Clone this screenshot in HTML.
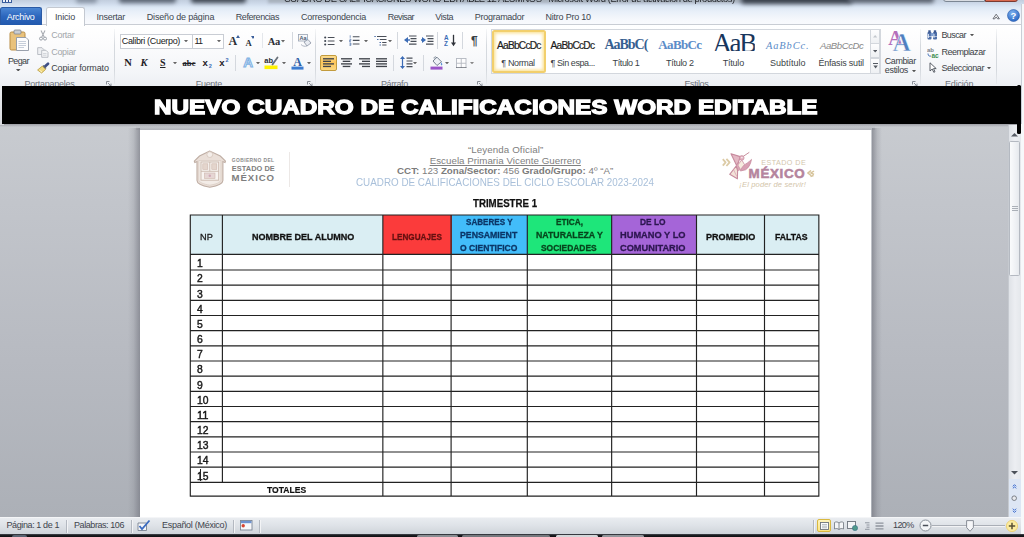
<!DOCTYPE html>
<html lang="es"><head><meta charset="utf-8"><title>Cuadro de calificaciones</title>
<style>
html,body{margin:0;padding:0}
body{width:1024px;height:537px;overflow:hidden;position:relative;background:#fff;font-family:"Liberation Sans",sans-serif}
.t{position:absolute;white-space:nowrap;display:block}
.r{position:absolute;display:block;box-sizing:border-box}
</style></head><body>
<div id="chrome-backgrounds">
<div class="r" style="left:0.00px;top:0.00px;width:1024.00px;height:25.00px;background:linear-gradient(#c2cede 0px,#d0dcec 4px,#dde8f5 7px,#e9f0f9 12px,#f6f8fc 20px,#f9fafd 25px)"></div>
<div class="r" style="left:76.00px;top:-5.00px;width:21.00px;height:8.00px;background:#8793a3;filter:blur(2px);border-radius:3px"></div>
<div class="r" style="left:119.00px;top:-5.00px;width:57.00px;height:8.20px;background:#5c6674;filter:blur(2px);border-radius:3px"></div>
<div class="r" style="left:191.00px;top:-5.00px;width:55.00px;height:8.40px;background:#414955;filter:blur(2px);border-radius:3px"></div>
<div class="r" style="left:268.00px;top:-5.00px;width:474.00px;height:8.20px;background:#a7b0bc;filter:blur(1.500px)"></div>
<div class="r" style="left:741.00px;top:-5.00px;width:111.00px;height:8.60px;background:#3a414c;filter:blur(2px);border-radius:3px"></div>
<div class="r" style="left:848.00px;top:-5.00px;width:86.00px;height:8.30px;background:#59626f;filter:blur(2px);border-radius:3px"></div>
<span class="t" style="left:284.00px;top:-7.86px;font:normal normal 9.40px/13px 'Liberation Sans',sans-serif;color:#23262b;letter-spacing:-0.419px;filter:blur(.4px);">CUADRO DE CALIFICACIONES WORD EDITABLE 12 ALUMNOS - Microsoft Word (Error de activación de productos)</span>
<div class="r" style="left:943.00px;top:-4.00px;width:42.00px;height:6.00px;background:#d9dde3;border:1px solid #7c8794;border-radius:0 0 0 3px"></div>
<div class="r" style="left:985.00px;top:-4.00px;width:32.50px;height:6.00px;background:#d9694e;border:1px solid #7a3a30;border-radius:0 0 3px 0"></div>
<div class="r" style="left:2.00px;top:-2.00px;width:9.50px;height:5.20px;background:#eef2f9;border:1px solid #3b5f9f"></div>
<div class="r" style="left:4.50px;top:0.00px;width:1.50px;height:2.00px;background:#2f4f8f"></div>
<div class="r" style="left:7.50px;top:0.00px;width:1.50px;height:2.00px;background:#2f4f8f"></div>
<div class="r" style="left:0.00px;top:24.40px;width:1024.00px;height:61.60px;background:linear-gradient(#ffffff 0,#fcfcfd 30%,#f3f5f8 80%,#eceff3 100%);border-top:1px solid #c9cdd4"></div>
<div class="r" style="left:0.00px;top:124.00px;width:1024.00px;height:393.00px;background:linear-gradient(#c8cbd0,#c2c5cb 20%,#b7bac1 60%,#acb0b7 100%)"></div>
<div class="r" style="left:0.00px;top:124.00px;width:1024.00px;height:3.00px;background:linear-gradient(rgba(120,120,128,.55),rgba(160,160,168,0))"></div>
<div class="r" style="left:127.50px;top:128.00px;width:12.00px;height:389.00px;background:linear-gradient(90deg,rgba(120,122,132,0),rgba(120,122,132,.18) 45%,rgba(112,114,124,.62))"></div>
<div class="r" style="left:871.50px;top:128.00px;width:10.50px;height:389.00px;background:linear-gradient(270deg,rgba(120,122,132,0),rgba(120,122,132,.2) 45%,rgba(112,114,124,.62))"></div>
<div class="r" style="left:136.00px;top:126.00px;width:739.00px;height:4.00px;background:linear-gradient(rgba(120,122,132,0),rgba(120,122,132,.28))"></div>
<div class="r" style="left:139.50px;top:129.80px;width:731.80px;height:387.20px;background:#fff"></div>
<div class="r" style="left:0.00px;top:516.50px;width:1024.00px;height:17.50px;background:linear-gradient(#e9ecf0,#dfe3e8 45%,#cfd4da 100%);border-top:1px solid #f4f5f7"></div>
<div class="r" style="left:0.00px;top:533.80px;width:1024.00px;height:3.20px;background:linear-gradient(#4c5058,#1d1f23 35%,#0e0f11)"></div>
</div>
<nav id="ribbon-tabs">
<div class="r" style="left:0.00px;top:6.80px;width:41.80px;height:18.00px;background:linear-gradient(#4b86d3,#2c66bd 50%,#2259ad);border:1px solid #2a5aa5;border-bottom:none;border-radius:2.5px 2.5px 0 0"></div>
<span class="t" style="left:6.75px;top:10.87px;font:normal normal 9.00px/13px 'Liberation Sans',sans-serif;color:#fff;letter-spacing:-0.323px;">Archivo</span>
<div class="r" style="left:45.50px;top:6.80px;width:39.50px;height:19.20px;background:#fff;border:1px solid #c4c9d1;border-bottom:none;border-radius:2.5px 2.5px 0 0"></div>
<span class="t" style="left:55.00px;top:10.87px;font:normal normal 9.00px/13px 'Liberation Sans',sans-serif;color:#40464f;letter-spacing:-0.168px;">Inicio</span>
<span class="t" style="left:96.50px;top:10.87px;font:normal normal 9.00px/13px 'Liberation Sans',sans-serif;color:#40464f;letter-spacing:-0.252px;">Insertar</span>
<span class="t" style="left:146.75px;top:10.87px;font:normal normal 9.00px/13px 'Liberation Sans',sans-serif;color:#40464f;letter-spacing:-0.160px;">Diseño de página</span>
<span class="t" style="left:235.75px;top:10.87px;font:normal normal 9.00px/13px 'Liberation Sans',sans-serif;color:#40464f;letter-spacing:-0.434px;">Referencias</span>
<span class="t" style="left:301.00px;top:10.87px;font:normal normal 9.00px/13px 'Liberation Sans',sans-serif;color:#40464f;letter-spacing:-0.236px;">Correspondencia</span>
<span class="t" style="left:387.75px;top:10.87px;font:normal normal 9.00px/13px 'Liberation Sans',sans-serif;color:#40464f;letter-spacing:-0.608px;">Revisar</span>
<span class="t" style="left:435.25px;top:10.87px;font:normal normal 9.00px/13px 'Liberation Sans',sans-serif;color:#40464f;letter-spacing:-0.369px;">Vista</span>
<span class="t" style="left:474.75px;top:10.87px;font:normal normal 9.00px/13px 'Liberation Sans',sans-serif;color:#40464f;letter-spacing:-0.271px;">Programador</span>
<span class="t" style="left:545.60px;top:10.87px;font:normal normal 9.00px/13px 'Liberation Sans',sans-serif;color:#40464f;letter-spacing:-0.243px;">Nitro Pro 10</span>
<svg class="r" style="left:992.40px;top:12.60px;" width="8.4" height="7" viewBox="0 0 8.4 7"><path d="M1 5.800L4.200 1.200L7.400 5.800L5.600 5.800L4.200 3.900L2.800 5.800Z" fill="#fff" stroke="#5a5f68" stroke-width=".9" stroke-linejoin="round"/></svg>
<svg class="r" style="left:1007.00px;top:8.50px;" width="13" height="13" viewBox="0 0 13 13"><defs><radialGradient id="hg" cx=".4" cy=".3" r=".8"><stop offset="0" stop-color="#7fb2ee"/><stop offset="1" stop-color="#1f5fc0"/></radialGradient></defs><circle cx="6.5" cy="6.5" r="6" fill="url(#hg)" stroke="#2a5aa8" stroke-width=".6"/><text x="6.5" y="10" font-family="Liberation Sans,sans-serif" font-weight="bold" font-size="9.5" fill="#fff" text-anchor="middle">?</text></svg>
</nav>
<section id="ribbon">
<div id="grp-portapapeles">
<svg class="r" style="left:8.50px;top:28.50px;" width="21" height="23" viewBox="0 0 21 23"><rect x="1" y="3" width="15" height="18" rx="1.5" fill="#e9c27c" stroke="#b98d45" stroke-width="1"/>
<rect x="5" y="1" width="7" height="4" rx="1" fill="#c9cdd3" stroke="#80868f" stroke-width=".8"/>
<path d="M7.5 8.5H17L19.5 11V21.5H7.5Z" fill="#fdfdfe" stroke="#8e97a6" stroke-width=".9"/>
<path d="M9.5 12.5H17M9.5 14.5H17M9.5 16.5H17M9.5 18.5H15" stroke="#b7c1d1" stroke-width=".8"/></svg>
<span class="t" style="left:8.00px;top:54.97px;font:normal normal 9.00px/13px 'Liberation Sans',sans-serif;color:#3b3f46;letter-spacing:-0.653px;">Pegar</span>
<svg class="r" style="left:16.05px;top:68.65px;" width="4.5" height="2.7" viewBox="0 0 5 3"><path d="M0 0H5L2.5 3Z" fill="#555"/></svg>
<svg class="r" style="left:38.50px;top:30.00px;" width="8" height="11" viewBox="0 0 8 11"><path d="M2 .5L5.2 7M6 .5L2.8 7" stroke="#a9adb3" stroke-width="1.1" fill="none"/><circle cx="2" cy="8.6" r="1.5" fill="none" stroke="#9aa0a8" stroke-width="1"/><circle cx="6" cy="8.6" r="1.5" fill="none" stroke="#9aa0a8" stroke-width="1"/></svg>
<span class="t" style="left:51.25px;top:29.47px;font:normal normal 9.00px/13px 'Liberation Sans',sans-serif;color:#a2a6ab;letter-spacing:-0.293px;">Cortar</span>
<svg class="r" style="left:36.50px;top:46.50px;" width="12" height="11" viewBox="0 0 12 11"><path d="M.7 .7H5L7 2.7V7.5H.7Z" fill="#eef0f3" stroke="#b4b9c0" stroke-width=".9"/><path d="M4.7 3.3H9L11 5.3V10.3H4.7Z" fill="#f4f5f7" stroke="#b4b9c0" stroke-width=".9"/><path d="M6 6.5H9.5M6 8.2H9.5" stroke="#c4c8ce" stroke-width=".7"/></svg>
<span class="t" style="left:51.25px;top:45.97px;font:normal normal 9.00px/13px 'Liberation Sans',sans-serif;color:#a2a6ab;letter-spacing:-0.336px;">Copiar</span>
<svg class="r" style="left:36.50px;top:62.00px;" width="13" height="12" viewBox="0 0 13 12"><path d="M8 4.500L11 1.700" stroke="#3d4f86" stroke-width="2.600" stroke-linecap="round"/><path d="M6 3.600L9 6.600" stroke="#5e6672" stroke-width="1.400"/><path d="M5.200 4.200L8.600 7.400L4.600 11L.6 8Z" fill="#f1d97e" stroke="#b99a3a" stroke-width=".8"/><path d="M2.500 8.200L5 10" stroke="#fff6cf" stroke-width=".9"/></svg>
<span class="t" style="left:51.25px;top:61.97px;font:normal normal 9.00px/13px 'Liberation Sans',sans-serif;color:#3b3f46;letter-spacing:-0.145px;">Copiar formato</span>
<span class="t" style="left:24.50px;top:78.07px;font:normal normal 9.00px/13px 'Liberation Sans',sans-serif;color:#70757d;letter-spacing:-0.253px;">Portapapeles</span>
<svg class="r" style="left:105.50px;top:80.80px;" width="6" height="6" viewBox="0 0 6 6"><path d="M.5 3.5V.5H3.5" fill="none" stroke="#8a9099" stroke-width="1"/><path d="M2 2L5 5M5 2.6V5H2.6" fill="none" stroke="#8a9099" stroke-width="1"/></svg>
<div class="r" style="left:114.20px;top:29.00px;width:1.00px;height:55.00px;background:linear-gradient(rgba(213,217,222,.2),#d5d9de 30%,#d5d9de 75%,rgba(213,217,222,.3))"></div>
</div>
<div id="grp-fuente">
<div class="r" style="left:119.50px;top:33.60px;width:73.00px;height:15.60px;background:#fff;border:1px solid #c9cdd4"></div>
<div class="r" style="left:192.00px;top:33.60px;width:31.50px;height:15.60px;background:#fff;border:1px solid #c9cdd4"></div>
<span class="t" style="left:121.75px;top:35.17px;font:normal normal 9.00px/13px 'Liberation Sans',sans-serif;color:#222;letter-spacing:-0.329px;">Calibri (Cuerpo)</span>
<svg class="r" style="left:184.00px;top:40.10px;" width="4" height="2.4" viewBox="0 0 5 3"><path d="M0 0H5L2.5 3Z" fill="#666"/></svg>
<span class="t" style="left:194.50px;top:35.17px;font:normal normal 9.00px/13px 'Liberation Sans',sans-serif;color:#222;letter-spacing:-0.922px;">11</span>
<svg class="r" style="left:216.80px;top:40.10px;" width="4" height="2.4" viewBox="0 0 5 3"><path d="M0 0H5L2.5 3Z" fill="#666"/></svg>
<span class="t" style="left:228.50px;top:32.65px;font:normal bold 12.00px/17px 'Liberation Serif',serif;color:#2b2f36;letter-spacing:-1.166px;">A</span>
<svg class="r" style="left:235.50px;top:34.50px;" width="4" height="3" viewBox="0 0 4 3"><path d="M0 3H4L2 0Z" fill="#3b5f9b"/></svg>
<span class="t" style="left:245.50px;top:36.70px;font:normal bold 8.60px/12px 'Liberation Serif',serif;color:#2b2f36;letter-spacing:-0.711px;">A</span>
<svg class="r" style="left:250.60px;top:36.20px;" width="3.6" height="2.6" viewBox="0 0 3.6 2.6"><path d="M0 0H4L2 3Z" fill="#3b5f9b"/></svg>
<span class="t" style="left:267.75px;top:33.96px;font:normal bold 10.50px/15px 'Liberation Serif',serif;color:#2b2f36;letter-spacing:-0.416px;">Aa</span>
<svg class="r" style="left:281.00px;top:40.30px;" width="4" height="2.4" viewBox="0 0 5 3"><path d="M0 0H5L2.5 3Z" fill="#666"/></svg>
<div class="r" style="left:291.50px;top:32.00px;width:1.00px;height:17.00px;background:#d4d8de"></div>
<div class="r" style="left:261.50px;top:33.00px;width:1.00px;height:15.00px;background:#e4e7eb"></div>
<svg class="r" style="left:297.50px;top:34.00px;" width="14" height="13" viewBox="0 0 14 13"><rect x=".5" y=".5" width="9" height="6.5" fill="#f7f8fa" stroke="#9aa3b2" stroke-width=".8"/><text x="1.5" y="6" font-family="Liberation Sans,sans-serif" font-size="5.5" font-weight="bold" fill="#4d5a74">Aa</text><path d="M6 8L10 5.5L13 9L9 12Z" fill="#e9ecf2" stroke="#8a93a3" stroke-width=".8"/><path d="M3 10.5C5 12.5 7 12.5 9 12" stroke="#9aa3b2" stroke-width=".8" fill="none"/></svg>
<span class="t" style="left:124.25px;top:55.16px;font:normal bold 10.50px/15px 'Liberation Serif',serif;color:#1e2126;letter-spacing:-0.083px;">N</span>
<span class="t" style="left:140.50px;top:55.16px;font:italic bold 10.50px/15px 'Liberation Serif',serif;color:#1e2126;letter-spacing:0.996px;">K</span>
<span class="t" style="left:160.00px;top:55.62px;font:normal bold 10.00px/14px 'Liberation Serif',serif;color:#1e2126;letter-spacing:-0.062px;text-decoration:underline;">S</span>
<svg class="r" style="left:173.00px;top:61.60px;" width="4" height="2.4" viewBox="0 0 5 3"><path d="M0 0H5L2.5 3Z" fill="#666"/></svg>
<span class="t" style="left:182.50px;top:56.93px;font:normal bold 8.50px/12px 'Liberation Serif',serif;color:#1e2126;letter-spacing:0.083px;text-decoration:line-through;">abc</span>
<span class="t" style="left:202.50px;top:55.97px;font:normal bold 9.60px/13px 'Liberation Sans',sans-serif;color:#1e2126;letter-spacing:0.161px;">x</span>
<span class="t" style="left:208.80px;top:61.59px;font:normal bold 5.50px/8px 'Liberation Sans',sans-serif;color:#3b6bb5;letter-spacing:-0.059px;">2</span>
<span class="t" style="left:219.25px;top:55.97px;font:normal bold 9.60px/13px 'Liberation Sans',sans-serif;color:#1e2126;letter-spacing:0.161px;">x</span>
<span class="t" style="left:225.50px;top:55.59px;font:normal bold 5.50px/8px 'Liberation Sans',sans-serif;color:#3b6bb5;letter-spacing:-0.059px;">2</span>
<div class="r" style="left:235.00px;top:55.00px;width:1.00px;height:16.00px;background:#d4d8de"></div>
<svg class="r" style="left:241.50px;top:56.00px;" width="12" height="13" viewBox="0 0 12 13"><text x="6" y="11.3" font-family="Liberation Sans,sans-serif" font-weight="bold" font-size="13.5" text-anchor="middle" fill="#e6f1fb" stroke="#7fb1e3" stroke-width="1">A</text></svg>
<svg class="r" style="left:256.30px;top:61.60px;" width="4" height="2.4" viewBox="0 0 5 3"><path d="M0 0H5L2.5 3Z" fill="#666"/></svg>
<svg class="r" style="left:264.00px;top:55.50px;" width="15" height="14" viewBox="0 0 15 14"><text x="0.3" y="7" font-family="Liberation Sans,sans-serif" font-weight="bold" font-size="7.5" fill="#2a2d33">ab</text><path d="M8.5 8.5L13.5 1.5" stroke="#6a7079" stroke-width="1.8" stroke-linecap="round"/><rect x=".5" y="9.5" width="13" height="3.6" fill="#fff200"/></svg>
<svg class="r" style="left:281.50px;top:61.60px;" width="4" height="2.4" viewBox="0 0 5 3"><path d="M0 0H5L2.5 3Z" fill="#666"/></svg>
<svg class="r" style="left:290.50px;top:55.50px;" width="13" height="14" viewBox="0 0 13 14"><text x="6.5" y="9.6" font-family="Liberation Serif,serif" font-weight="bold" font-size="12" text-anchor="middle" fill="#2f5fa5">A</text><rect x=".5" y="10.6" width="12" height="3" fill="#3b7bd0"/></svg>
<svg class="r" style="left:306.50px;top:61.60px;" width="4" height="2.4" viewBox="0 0 5 3"><path d="M0 0H5L2.5 3Z" fill="#666"/></svg>
<span class="t" style="left:195.75px;top:78.07px;font:normal normal 9.00px/13px 'Liberation Sans',sans-serif;color:#70757d;letter-spacing:-0.295px;">Fuente</span>
<svg class="r" style="left:306.50px;top:80.80px;" width="6" height="6" viewBox="0 0 6 6"><path d="M.5 3.5V.5H3.5" fill="none" stroke="#8a9099" stroke-width="1"/><path d="M2 2L5 5M5 2.6V5H2.6" fill="none" stroke="#8a9099" stroke-width="1"/></svg>
<div class="r" style="left:315.25px;top:29.00px;width:1.00px;height:55.00px;background:linear-gradient(rgba(213,217,222,.2),#d5d9de 30%,#d5d9de 75%,rgba(213,217,222,.3))"></div>
</div>
<div id="grp-parrafo">
<svg class="r" style="left:323.50px;top:35.50px;" width="11" height="10" viewBox="0 0 11 10"><circle cx="1.2" cy="1.5" r="1.05" fill="#3f4652"/><circle cx="1.2" cy="5" r="1.05" fill="#3f4652"/><circle cx="1.2" cy="8.5" r="1.05" fill="#3f4652"/><path d="M3.8 1.5H10.5M3.8 5H10.5M3.8 8.5H10.5" stroke="#4a4f58" stroke-width="1.1"/></svg>
<svg class="r" style="left:338.50px;top:39.80px;" width="4" height="2.4" viewBox="0 0 5 3"><path d="M0 0H5L2.5 3Z" fill="#666"/></svg>
<svg class="r" style="left:349.00px;top:35.00px;" width="11" height="11" viewBox="0 0 11 11"><path d="M1.2 .3V2.8M.5 4.2H1.9V5.4H.5V6.6H1.9M.5 8H1.9V10.4H.5M.5 9.2H1.9" stroke="#4a6ea8" stroke-width=".7" fill="none"/><path d="M3.8 1.8H10.5M3.8 5.4H10.5M3.8 9H10.5" stroke="#4a4f58" stroke-width="1.1"/></svg>
<svg class="r" style="left:364.00px;top:39.80px;" width="4" height="2.4" viewBox="0 0 5 3"><path d="M0 0H5L2.5 3Z" fill="#666"/></svg>
<svg class="r" style="left:373.50px;top:35.00px;" width="13" height="11" viewBox="0 0 13 11"><path d="M.3 1.5H1.8M3 4.5H4.5M5.5 7.5H7M5.5 10H7" stroke="#4a6ea8" stroke-width="1"/><path d="M3 1.5H12.5M5.8 4.5H12.5M8.2 7.5H12.5M8.2 10H12.5" stroke="#4a4f58" stroke-width="1"/></svg>
<svg class="r" style="left:387.80px;top:39.80px;" width="4" height="2.4" viewBox="0 0 5 3"><path d="M0 0H5L2.5 3Z" fill="#666"/></svg>
<div class="r" style="left:397.00px;top:32.00px;width:1.00px;height:17.00px;background:#d4d8de"></div>
<svg class="r" style="left:403.50px;top:35.00px;" width="13" height="11" viewBox="0 0 13 11"><path d="M5 1H12.5M6.5 3.7H12.5M6.5 6.4H12.5M5 9.2H12.5" stroke="#4a4f58" stroke-width="1.2"/><path d="M0 5L4 2V8Z" fill="#3b6bb5"/><path d="M3.5 5H6" stroke="#3b6bb5" stroke-width="1.4"/></svg>
<svg class="r" style="left:420.50px;top:35.00px;" width="13" height="11" viewBox="0 0 13 11"><path d="M5 1H12.5M6.5 3.7H12.5M6.5 6.4H12.5M5 9.2H12.5" stroke="#4a4f58" stroke-width="1.2"/><path d="M5 5L1 2V8Z" fill="#3b6bb5"/><path d="M0 5H2" stroke="#3b6bb5" stroke-width="1.4"/></svg>
<div class="r" style="left:437.00px;top:32.00px;width:1.00px;height:17.00px;background:#d4d8de"></div>
<svg class="r" style="left:443.50px;top:34.00px;" width="13" height="13" viewBox="0 0 13 13"><text x="0" y="5.6" font-family="Liberation Sans,sans-serif" font-weight="bold" font-size="6.3" fill="#3b6bb5">A</text><text x="0" y="12" font-family="Liberation Sans,sans-serif" font-weight="bold" font-size="6.3" fill="#3b6bb5">Z</text><path d="M9.5 .8V10" stroke="#2f333a" stroke-width="1.3"/><path d="M7 8.5H12L9.5 12.3Z" fill="#2f333a"/></svg>
<div class="r" style="left:462.00px;top:32.00px;width:1.00px;height:17.00px;background:#d4d8de"></div>
<span class="t" style="left:471.00px;top:32.84px;font:normal bold 12.00px/17px 'Liberation Sans',sans-serif;color:#3a3e45;letter-spacing:0.826px;">¶</span>
<div class="r" style="left:320.25px;top:54.50px;width:16.50px;height:16.25px;background:linear-gradient(#fbdb8f,#fdc65a 45%,#fbd77f);border:1px solid #c29b3d;border-radius:2px"></div>
<svg class="r" style="left:323.00px;top:57.70px;" width="12" height="11.2" viewBox="0 0 12 11.2"><path d="M0 0.8H11" stroke="#3f434a" stroke-width="1.35"/><path d="M0 3.35H8" stroke="#3f434a" stroke-width="1.35"/><path d="M0 5.9H11" stroke="#3f434a" stroke-width="1.35"/><path d="M0 8.45H8" stroke="#3f434a" stroke-width="1.35"/></svg>
<svg class="r" style="left:341.00px;top:57.70px;" width="12" height="11.2" viewBox="0 0 12 11.2"><path d="M0 0.8H11" stroke="#3f434a" stroke-width="1.35"/><path d="M1.7 3.35H9.3" stroke="#3f434a" stroke-width="1.35"/><path d="M0 5.9H11" stroke="#3f434a" stroke-width="1.35"/><path d="M1.7 8.45H9.3" stroke="#3f434a" stroke-width="1.35"/></svg>
<svg class="r" style="left:358.50px;top:57.70px;" width="12" height="11.2" viewBox="0 0 12 11.2"><path d="M0 0.8H11" stroke="#3f434a" stroke-width="1.35"/><path d="M3 3.35H11" stroke="#3f434a" stroke-width="1.35"/><path d="M0 5.9H11" stroke="#3f434a" stroke-width="1.35"/><path d="M3 8.45H11" stroke="#3f434a" stroke-width="1.35"/></svg>
<svg class="r" style="left:376.00px;top:57.70px;" width="12" height="11.2" viewBox="0 0 12 11.2"><path d="M0 0.8H11" stroke="#3f434a" stroke-width="1.35"/><path d="M0 3.35H11" stroke="#3f434a" stroke-width="1.35"/><path d="M0 5.9H11" stroke="#3f434a" stroke-width="1.35"/><path d="M0 8.45H11" stroke="#3f434a" stroke-width="1.35"/></svg>
<div class="r" style="left:393.00px;top:55.00px;width:1.00px;height:16.00px;background:#d4d8de"></div>
<svg class="r" style="left:399.50px;top:56.00px;" width="13" height="13" viewBox="0 0 13 13"><path d="M2.5 0L5 3H0Z M2.5 13L5 10H0Z" fill="#3b6bb5"/><path d="M2.5 2.5V10.5" stroke="#3b6bb5" stroke-width="1.2"/><path d="M6.5 2.2H12.5M6.5 5H12.5M6.5 7.8H12.5M6.5 10.6H12.5" stroke="#4a4f58" stroke-width="1.2"/></svg>
<svg class="r" style="left:413.30px;top:61.60px;" width="4" height="2.4" viewBox="0 0 5 3"><path d="M0 0H5L2.5 3Z" fill="#666"/></svg>
<div class="r" style="left:423.00px;top:55.00px;width:1.00px;height:16.00px;background:#d4d8de"></div>
<svg class="r" style="left:429.50px;top:55.50px;" width="13" height="14" viewBox="0 0 13 14"><path d="M3 5L7 1.2L11.5 5.8L7 9.5Z" fill="#eef1f6" stroke="#6a7687" stroke-width=".9"/><path d="M4.2 2.6C3.6 .6 6.2 .2 6.6 2" fill="none" stroke="#6a7687" stroke-width=".8"/><path d="M11.3 6.3C12.6 8 12.6 9.2 11.6 9.4C10.6 9.2 10.6 8 11.3 6.3Z" fill="#5b8fd6"/><rect x=".5" y="10.6" width="12" height="3" fill="#9a55c8"/></svg>
<svg class="r" style="left:445.30px;top:61.60px;" width="4" height="2.4" viewBox="0 0 5 3"><path d="M0 0H5L2.5 3Z" fill="#666"/></svg>
<svg class="r" style="left:456.00px;top:57.50px;" width="10.5" height="10.5" viewBox="0 0 10.5 10.5"><rect x=".5" y=".5" width="9.5" height="9.5" fill="#fdfdfe" stroke="#b3b8c0" stroke-width=".9"/><path d="M5.25 .5V10M.5 5.25H10" stroke="#b3b8c0" stroke-width=".9"/><path d="M0 10H10.500" stroke="#4a4f58" stroke-width="1.100"/></svg>
<svg class="r" style="left:470.30px;top:61.60px;" width="4" height="2.4" viewBox="0 0 5 3"><path d="M0 0H5L2.5 3Z" fill="#888"/></svg>
<span class="t" style="left:381.00px;top:78.07px;font:normal normal 9.00px/13px 'Liberation Sans',sans-serif;color:#70757d;letter-spacing:-0.395px;">Párrafo</span>
<svg class="r" style="left:476.50px;top:80.80px;" width="6" height="6" viewBox="0 0 6 6"><path d="M.5 3.5V.5H3.5" fill="none" stroke="#8a9099" stroke-width="1"/><path d="M2 2L5 5M5 2.6V5H2.6" fill="none" stroke="#8a9099" stroke-width="1"/></svg>
<div class="r" style="left:486.00px;top:29.00px;width:1.00px;height:55.00px;background:linear-gradient(rgba(213,217,222,.2),#d5d9de 30%,#d5d9de 75%,rgba(213,217,222,.3))"></div>
</div>
<div id="grp-estilos">
<div class="r" style="left:491.00px;top:28.80px;width:389.50px;height:44.80px;background:#fff;border:1px solid #d3d7dd"></div>
<div class="r" style="left:492.30px;top:30.40px;width:53.50px;height:42.20px;background:#fff;border:2px solid #f2cf6c;border-radius:2.5px;box-shadow:inset 0 0 3px 1.5px rgba(250,226,150,.95)"></div>
<span class="t" style="left:497.00px;top:38.73px;font:normal normal 10.20px/14px 'Liberation Sans',sans-serif;color:#1c1c1c;letter-spacing:-0.773px;-webkit-text-stroke:.2px #1c1c1c;">AaBbCcDc</span>
<span class="t" style="left:501.30px;top:57.07px;font:normal normal 9.00px/13px 'Liberation Sans',sans-serif;color:#3b3f46;letter-spacing:-0.367px;">¶ Normal</span>
<span class="t" style="left:550.50px;top:38.73px;font:normal normal 10.20px/14px 'Liberation Sans',sans-serif;color:#1c1c1c;letter-spacing:-0.761px;-webkit-text-stroke:.2px #1c1c1c;">AaBbCcDc</span>
<span class="t" style="left:550.50px;top:57.07px;font:normal normal 9.00px/13px 'Liberation Sans',sans-serif;color:#3b3f46;letter-spacing:-0.420px;">¶ Sin espa...</span>
<span class="t" style="left:604.40px;top:35.48px;font:normal bold 14.00px/20px 'Liberation Serif',serif;color:#365f91;letter-spacing:-1.049px;">AaBbC</span>
<span class="t" style="left:643.80px;top:35.48px;font:normal bold 14.00px/20px 'Liberation Serif',serif;color:#365f91;letter-spacing:0.000px;">(</span>
<span class="t" style="left:612.60px;top:57.07px;font:normal normal 9.00px/13px 'Liberation Sans',sans-serif;color:#3b3f46;letter-spacing:-0.402px;">Título 1</span>
<span class="t" style="left:658.30px;top:36.41px;font:normal bold 13.00px/18px 'Liberation Serif',serif;color:#5b8cc8;letter-spacing:-0.625px;">AaBbCc</span>
<span class="t" style="left:666.00px;top:57.07px;font:normal normal 9.00px/13px 'Liberation Sans',sans-serif;color:#3b3f46;letter-spacing:-0.277px;">Título 2</span>
<span class="t" style="left:712.40px;top:24.29px;font:normal normal 27.00px/38px 'Liberation Serif',serif;color:#17365d;letter-spacing:-2.364px;clip-path:inset(0 0 11.2px 0);">AaB</span>
<span class="t" style="left:722.80px;top:57.07px;font:normal normal 9.00px/13px 'Liberation Sans',sans-serif;color:#3b3f46;letter-spacing:-0.235px;">Título</span>
<span class="t" style="left:765.90px;top:37.59px;font:italic normal 10.40px/15px 'Liberation Serif',serif;color:#5b8cc8;letter-spacing:0.920px;">AaBbCc.</span>
<span class="t" style="left:770.00px;top:57.07px;font:normal normal 9.00px/13px 'Liberation Sans',sans-serif;color:#3b3f46;letter-spacing:-0.003px;">Subtítulo</span>
<span class="t" style="left:820.00px;top:39.25px;font:italic normal 9.60px/13px 'Liberation Sans',sans-serif;color:#8a8a8a;letter-spacing:-0.431px;">AaBbCcDc</span>
<span class="t" style="left:818.40px;top:57.07px;font:normal normal 9.00px/13px 'Liberation Sans',sans-serif;color:#3b3f46;letter-spacing:-0.202px;">Énfasis sutil</span>
<div class="r" style="left:869.80px;top:28.80px;width:10.70px;height:14.80px;background:linear-gradient(#fdfdfe,#eef0f3);border:1px solid #d3d7dd"></div>
<div class="r" style="left:869.80px;top:43.20px;width:10.70px;height:15.20px;background:linear-gradient(#fdfdfe,#eef0f3);border:1px solid #d3d7dd"></div>
<div class="r" style="left:869.80px;top:58.00px;width:10.70px;height:15.60px;background:linear-gradient(#fdfdfe,#eef0f3);border:1px solid #d3d7dd"></div>
<svg class="r" style="left:873.00px;top:35.00px;" width="4.4" height="2.6" viewBox="0 0 4.4 2.6"><path d="M0 2.6H4.4L2.2 0Z" fill="#c3c7cd"/></svg>
<svg class="r" style="left:873.00px;top:50.00px;" width="4.4" height="2.6" viewBox="0 0 4.4 2.6"><path d="M0 0H4.4L2.2 2.6Z" fill="#555a62"/></svg>
<svg class="r" style="left:872.60px;top:62.60px;" width="5.2" height="6" viewBox="0 0 5.2 6"><path d="M0 .5H5.2" stroke="#555a62" stroke-width="1"/><path d="M.4 2.6H4.8L2.6 5.4Z" fill="#555a62"/></svg>
<svg class="r" style="left:886.00px;top:27.00px;" width="28" height="27" viewBox="886 27 28 27"><text x="888.300" y="44.800" font-family="Liberation Serif,serif" font-weight="bold" font-size="20" fill="#b56fbb">A</text><text x="892.600" y="51.400" font-family="Liberation Serif,serif" font-weight="bold" font-size="25.500" fill="#4f7fc0" stroke="#fff" stroke-width=".5">A</text></svg>
<span class="t" style="left:884.80px;top:54.87px;font:normal normal 9.00px/13px 'Liberation Sans',sans-serif;color:#3b3f46;letter-spacing:-0.444px;">Cambiar</span>
<span class="t" style="left:884.80px;top:64.47px;font:normal normal 9.00px/13px 'Liberation Sans',sans-serif;color:#3b3f46;letter-spacing:-0.330px;">estilos</span>
<svg class="r" style="left:911.50px;top:69.80px;" width="4" height="2.4" viewBox="0 0 5 3"><path d="M0 0H5L2.5 3Z" fill="#555"/></svg>
<span class="t" style="left:684.50px;top:78.07px;font:normal normal 9.00px/13px 'Liberation Sans',sans-serif;color:#70757d;letter-spacing:-0.387px;">Estilos</span>
<svg class="r" style="left:912.00px;top:80.80px;" width="6" height="6" viewBox="0 0 6 6"><path d="M.5 3.5V.5H3.5" fill="none" stroke="#8a9099" stroke-width="1"/><path d="M2 2L5 5M5 2.6V5H2.6" fill="none" stroke="#8a9099" stroke-width="1"/></svg>
<div class="r" style="left:920.40px;top:29.00px;width:1.00px;height:55.00px;background:linear-gradient(rgba(213,217,222,.2),#d5d9de 30%,#d5d9de 75%,rgba(213,217,222,.3))"></div>
</div>
<div id="grp-edicion">
<svg class="r" style="left:927.00px;top:30.00px;" width="11" height="10" viewBox="0 0 11 10"><rect x=".5" y="2" width="4" height="7.500" rx="1" fill="#4f6fa8"/><rect x="6" y="2" width="4" height="7.500" rx="1" fill="#4f6fa8"/><rect x="3.800" y="3" width="3" height="3" fill="#7f9fd0"/><rect x="1.300" y=".3" width="2.400" height="2.500" fill="#3a5690"/><rect x="6.800" y=".3" width="2.400" height="2.500" fill="#3a5690"/><path d="M1.500 4V8M7 4V8" stroke="#dfe8f6" stroke-width=".9"/><path d="M.5 6.500H10" stroke="#e9eef7" stroke-width=".6"/></svg>
<span class="t" style="left:941.40px;top:29.27px;font:normal normal 9.00px/13px 'Liberation Sans',sans-serif;color:#3b3f46;letter-spacing:-0.569px;">Buscar</span>
<svg class="r" style="left:969.80px;top:34.10px;" width="4" height="2.4" viewBox="0 0 5 3"><path d="M0 0H5L2.5 3Z" fill="#555"/></svg>
<svg class="r" style="left:926.50px;top:45.50px;" width="13" height="12" viewBox="0 0 13 12"><text x="0" y="5.5" font-family="Liberation Sans,sans-serif" font-size="6" font-weight="bold" fill="#7a7f88">ab</text><text x="4.5" y="11.5" font-family="Liberation Sans,sans-serif" font-size="6.5" font-weight="bold" fill="#3f8f4f">ac</text><path d="M1 7.5C1 10 2.5 10.5 4 10" fill="none" stroke="#3b6bb5" stroke-width=".9"/></svg>
<span class="t" style="left:941.40px;top:45.67px;font:normal normal 9.00px/13px 'Liberation Sans',sans-serif;color:#3b3f46;letter-spacing:-0.472px;">Reemplazar</span>
<svg class="r" style="left:928.50px;top:62.00px;" width="8" height="11" viewBox="0 0 8 11"><path d="M1 .8V9L3.2 7L4.8 10.3L6 9.7L4.5 6.6H7.2Z" fill="#fff" stroke="#4a4f58" stroke-width=".9" stroke-linejoin="round"/></svg>
<span class="t" style="left:941.40px;top:61.97px;font:normal normal 9.00px/13px 'Liberation Sans',sans-serif;color:#3b3f46;letter-spacing:-0.403px;">Seleccionar</span>
<svg class="r" style="left:987.30px;top:66.80px;" width="4" height="2.4" viewBox="0 0 5 3"><path d="M0 0H5L2.5 3Z" fill="#555"/></svg>
<span class="t" style="left:945.00px;top:78.07px;font:normal normal 9.00px/13px 'Liberation Sans',sans-serif;color:#70757d;letter-spacing:-0.188px;">Edición</span>
<div class="r" style="left:995.80px;top:29.00px;width:1.00px;height:55.00px;background:linear-gradient(rgba(213,217,222,.2),#d5d9de 30%,#d5d9de 75%,rgba(213,217,222,.3))"></div>
<div class="r" style="left:1021.00px;top:25.00px;width:1.00px;height:61.00px;background:#dfe2e6"></div>
</div>
</section>
<div id="banner">
<div class="r" style="left:0.00px;top:86.00px;width:4.00px;height:38.50px;background:linear-gradient(#eceef1,#e2e4e8 40%,#d6d8dd)"></div>
<div class="r" style="left:2.00px;top:85.60px;width:1018.60px;height:38.40px;background:#000"></div>
<div class="t" style="left:153.55px;top:91.8px;width:661.5px;height:30px;overflow:visible"><span id="ban" style="display:inline-block;transform-origin:0 50%;transform:scaleX(1.1978);font:bold 20.30px/30px 'Liberation Sans',sans-serif;color:#fff;-webkit-text-stroke:1.30px #fff;white-space:nowrap">NUEVO CUADRO DE CALIFICACIONES WORD EDITABLE</span></div>
</div>
<main id="document">
<div id="doc-header">
<span class="t" style="left:467.90px;top:143.44px;font:normal normal 9.75px/14px 'Liberation Sans',sans-serif;color:#808080;letter-spacing:0.100px;">“Leyenda Oficial”</span>
<span class="t" style="left:429.70px;top:153.54px;font:normal normal 9.75px/14px 'Liberation Sans',sans-serif;color:#808080;letter-spacing:0.022px;text-decoration:underline;text-decoration-thickness:.8px;text-underline-offset:.6px;">Escuela Primaria Vicente Guerrero</span>
<span class="t" style="left:397.1px;top:163.54px;font:9.75px/14px 'Liberation Sans',sans-serif;color:#808080;letter-spacing:-0.011px;white-space:pre"><b style="color:#7b7b7b">CCT:</b> 123 <b style="color:#7b7b7b">Zona/Sector:</b> 456 <b style="color:#7b7b7b">Grado/Grupo:</b> 4º “A”</span>
<span class="t" style="left:356.00px;top:175.73px;font:normal normal 10.30px/14px 'Liberation Sans',sans-serif;color:#a9c0da;letter-spacing:0.000px;transform-origin:0 50%;transform:scaleX(0.9564);">CUADRO DE CALIFICACIONES DEL CICLO ESCOLAR 2023-2024</span>
<span class="t" style="left:472.90px;top:196.70px;font:normal bold 10.10px/14px 'Liberation Sans',sans-serif;color:#111;letter-spacing:0.000px;-webkit-text-stroke:.25px #111;transform-origin:0 50%;transform:scaleX(0.9598);">TRIMESTRE 1</span>
</div>
<div id="grades-table">
<div class="r" style="left:190.50px;top:214.90px;width:32.00px;height:39.70px;background:#daeef3"></div>
<div class="r" style="left:222.50px;top:214.90px;width:160.00px;height:39.70px;background:#daeef3"></div>
<div class="r" style="left:382.50px;top:214.90px;width:69.00px;height:39.70px;background:#fb3b3b"></div>
<div class="r" style="left:451.50px;top:214.90px;width:76.00px;height:39.70px;background:#42bdfa"></div>
<div class="r" style="left:527.50px;top:214.90px;width:84.00px;height:39.70px;background:#1ee67a"></div>
<div class="r" style="left:611.50px;top:214.90px;width:85.00px;height:39.70px;background:#a565d8"></div>
<div class="r" style="left:696.50px;top:214.90px;width:68.00px;height:39.70px;background:#daeef3"></div>
<div class="r" style="left:764.50px;top:214.90px;width:54.00px;height:39.70px;background:#daeef3"></div>
<svg class="r" style="left:180.00px;top:210.00px;" width="650" height="292" viewBox="180 210 650 292"><path d="M189.75 214.95H819.40M189.75 254.30H819.40M190.30 270.00H818.85M190.30 285.17H818.85M190.30 300.33H818.85M190.30 315.50H818.85M190.30 330.67H818.85M190.30 345.84H818.85M190.30 361.01H818.85M190.30 376.17H818.85M190.30 391.34H818.85M190.30 406.51H818.85M190.30 421.68H818.85M190.30 436.85H818.85M190.30 452.01H818.85M190.30 467.18H818.85M190.30 482.35H818.85M189.75 496.10H819.40M190.30 214.95V496.10M222.40 214.95V482.35M382.85 214.95V496.10M451.10 214.95V496.10M527.30 214.95V496.10M611.65 214.95V496.10M696.50 214.95V496.10M764.50 214.95V496.10M818.85 214.95V496.10" fill="none" stroke="#222" stroke-width="1.15"/></svg>
<span class="t" style="left:200.30px;top:229.61px;font:normal normal 9.40px/13px 'Liberation Sans',sans-serif;color:#1a1a1a;letter-spacing:0.000px;-webkit-text-stroke:.3px #1a1a1a;transform-origin:0 50%;transform:scaleX(0.9802);">NP</span>
<span class="t" style="left:251.70px;top:229.61px;font:normal bold 9.40px/13px 'Liberation Sans',sans-serif;color:#111;letter-spacing:0.000px;-webkit-text-stroke:.3px #111;transform-origin:0 50%;transform:scaleX(0.9621);">NOMBRE DEL ALUMNO</span>
<span class="t" style="left:392.00px;top:229.61px;font:normal bold 9.40px/13px 'Liberation Sans',sans-serif;color:#651010;letter-spacing:0.000px;-webkit-text-stroke:.3px #651010;transform-origin:0 50%;transform:scaleX(0.8702);">LENGUAJES</span>
<span class="t" style="left:465.70px;top:214.51px;font:normal bold 9.40px/13px 'Liberation Sans',sans-serif;color:#0b3566;letter-spacing:0.000px;-webkit-text-stroke:.3px #0b3566;transform-origin:0 50%;transform:scaleX(0.8623);">SABERES Y</span>
<span class="t" style="left:459.70px;top:227.71px;font:normal bold 9.40px/13px 'Liberation Sans',sans-serif;color:#0b3566;letter-spacing:0.000px;-webkit-text-stroke:.3px #0b3566;transform-origin:0 50%;transform:scaleX(0.9314);">PENSAMIENT</span>
<span class="t" style="left:459.80px;top:241.11px;font:normal bold 9.40px/13px 'Liberation Sans',sans-serif;color:#0b3566;letter-spacing:0.000px;-webkit-text-stroke:.3px #0b3566;transform-origin:0 50%;transform:scaleX(0.9100);">O CIENTIFICO</span>
<span class="t" style="left:555.70px;top:214.51px;font:normal bold 9.40px/13px 'Liberation Sans',sans-serif;color:#07451d;letter-spacing:0.000px;-webkit-text-stroke:.3px #07451d;transform-origin:0 50%;transform:scaleX(0.8795);">ETICA,</span>
<span class="t" style="left:536.10px;top:227.71px;font:normal bold 9.40px/13px 'Liberation Sans',sans-serif;color:#07451d;letter-spacing:0.000px;-webkit-text-stroke:.3px #07451d;transform-origin:0 50%;transform:scaleX(0.9333);">NATURALEZA Y</span>
<span class="t" style="left:541.40px;top:241.11px;font:normal bold 9.40px/13px 'Liberation Sans',sans-serif;color:#07451d;letter-spacing:0.000px;-webkit-text-stroke:.3px #07451d;transform-origin:0 50%;transform:scaleX(0.8977);">SOCIEDADES</span>
<span class="t" style="left:640.40px;top:214.51px;font:normal bold 9.40px/13px 'Liberation Sans',sans-serif;color:#2d1650;letter-spacing:0.000px;-webkit-text-stroke:.3px #2d1650;transform-origin:0 50%;transform:scaleX(0.8913);">DE LO</span>
<span class="t" style="left:620.30px;top:227.71px;font:normal bold 9.40px/13px 'Liberation Sans',sans-serif;color:#2d1650;letter-spacing:0.000px;-webkit-text-stroke:.3px #2d1650;transform-origin:0 50%;transform:scaleX(0.9879);">HUMANO Y LO</span>
<span class="t" style="left:620.30px;top:241.11px;font:normal bold 9.40px/13px 'Liberation Sans',sans-serif;color:#2d1650;letter-spacing:0.000px;-webkit-text-stroke:.3px #2d1650;transform-origin:0 50%;transform:scaleX(0.9855);">COMUNITARIO</span>
<span class="t" style="left:705.60px;top:229.61px;font:normal bold 9.40px/13px 'Liberation Sans',sans-serif;color:#111;letter-spacing:0.000px;-webkit-text-stroke:.3px #111;transform-origin:0 50%;transform:scaleX(0.9671);">PROMEDIO</span>
<span class="t" style="left:775.20px;top:229.61px;font:normal bold 9.40px/13px 'Liberation Sans',sans-serif;color:#111;letter-spacing:0.000px;-webkit-text-stroke:.3px #111;transform-origin:0 50%;transform:scaleX(0.9272);">FALTAS</span>
<span class="t" style="left:197.40px;top:256.22px;font:normal normal 10.90px/15px 'Liberation Sans',sans-serif;color:#1a1a1a;letter-spacing:0.000px;-webkit-text-stroke:.45px #1a1a1a;transform-origin:0 50%;transform:scaleX(0.9485);">1</span>
<span class="t" style="left:197.40px;top:271.39px;font:normal normal 10.90px/15px 'Liberation Sans',sans-serif;color:#1a1a1a;letter-spacing:0.000px;-webkit-text-stroke:.45px #1a1a1a;transform-origin:0 50%;transform:scaleX(0.9485);">2</span>
<span class="t" style="left:197.40px;top:286.56px;font:normal normal 10.90px/15px 'Liberation Sans',sans-serif;color:#1a1a1a;letter-spacing:0.000px;-webkit-text-stroke:.45px #1a1a1a;transform-origin:0 50%;transform:scaleX(0.9485);">3</span>
<span class="t" style="left:197.40px;top:301.73px;font:normal normal 10.90px/15px 'Liberation Sans',sans-serif;color:#1a1a1a;letter-spacing:0.000px;-webkit-text-stroke:.45px #1a1a1a;transform-origin:0 50%;transform:scaleX(0.9485);">4</span>
<span class="t" style="left:197.40px;top:316.90px;font:normal normal 10.90px/15px 'Liberation Sans',sans-serif;color:#1a1a1a;letter-spacing:0.000px;-webkit-text-stroke:.45px #1a1a1a;transform-origin:0 50%;transform:scaleX(0.9485);">5</span>
<span class="t" style="left:197.40px;top:332.06px;font:normal normal 10.90px/15px 'Liberation Sans',sans-serif;color:#1a1a1a;letter-spacing:0.000px;-webkit-text-stroke:.45px #1a1a1a;transform-origin:0 50%;transform:scaleX(0.9485);">6</span>
<span class="t" style="left:197.40px;top:347.23px;font:normal normal 10.90px/15px 'Liberation Sans',sans-serif;color:#1a1a1a;letter-spacing:0.000px;-webkit-text-stroke:.45px #1a1a1a;transform-origin:0 50%;transform:scaleX(0.9485);">7</span>
<span class="t" style="left:197.40px;top:362.40px;font:normal normal 10.90px/15px 'Liberation Sans',sans-serif;color:#1a1a1a;letter-spacing:0.000px;-webkit-text-stroke:.45px #1a1a1a;transform-origin:0 50%;transform:scaleX(0.9485);">8</span>
<span class="t" style="left:197.40px;top:377.57px;font:normal normal 10.90px/15px 'Liberation Sans',sans-serif;color:#1a1a1a;letter-spacing:0.000px;-webkit-text-stroke:.45px #1a1a1a;transform-origin:0 50%;transform:scaleX(0.9485);">9</span>
<span class="t" style="left:197.40px;top:392.74px;font:normal normal 10.90px/15px 'Liberation Sans',sans-serif;color:#1a1a1a;letter-spacing:0.000px;-webkit-text-stroke:.45px #1a1a1a;transform-origin:0 50%;transform:scaleX(0.9485);">10</span>
<span class="t" style="left:197.40px;top:407.90px;font:normal normal 10.90px/15px 'Liberation Sans',sans-serif;color:#1a1a1a;letter-spacing:0.000px;-webkit-text-stroke:.45px #1a1a1a;transform-origin:0 50%;transform:scaleX(1.0163);">11</span>
<span class="t" style="left:197.40px;top:423.07px;font:normal normal 10.90px/15px 'Liberation Sans',sans-serif;color:#1a1a1a;letter-spacing:0.000px;-webkit-text-stroke:.45px #1a1a1a;transform-origin:0 50%;transform:scaleX(0.9485);">12</span>
<span class="t" style="left:197.40px;top:438.24px;font:normal normal 10.90px/15px 'Liberation Sans',sans-serif;color:#1a1a1a;letter-spacing:0.000px;-webkit-text-stroke:.45px #1a1a1a;transform-origin:0 50%;transform:scaleX(0.9485);">13</span>
<span class="t" style="left:197.40px;top:453.41px;font:normal normal 10.90px/15px 'Liberation Sans',sans-serif;color:#1a1a1a;letter-spacing:0.000px;-webkit-text-stroke:.45px #1a1a1a;transform-origin:0 50%;transform:scaleX(0.9485);">14</span>
<span class="t" style="left:197.40px;top:468.58px;font:normal normal 10.90px/15px 'Liberation Sans',sans-serif;color:#1a1a1a;letter-spacing:0.000px;-webkit-text-stroke:.45px #1a1a1a;transform-origin:0 50%;transform:scaleX(0.9485);">15</span>
<span class="t" style="left:266.80px;top:483.21px;font:normal bold 9.40px/13px 'Liberation Sans',sans-serif;color:#111;letter-spacing:0.000px;-webkit-text-stroke:.2px #111;transform-origin:0 50%;transform:scaleX(0.9116);">TOTALES</span>
<div class="r" style="left:199.60px;top:468.50px;width:1.00px;height:12.50px;background:#222"></div>
</div>
<div id="logo-gobierno">
<svg class="r" style="left:188.00px;top:146.00px;" width="44" height="46" viewBox="188 146 44 46"><g fill="none" stroke="#bfaea4" stroke-width="1.1">
<path d="M209.8 151L199.5 156L194.3 161.2L194.8 162.6L197 161.6V180.5C197 184 203 186 209.8 187.2C216.600 186 222.900 184 222.900 180.500V161.600L225 162.600L225.500 161.200L220.300 156Z" fill="#eadfd8"/>
<path d="M198.800 160.500V180C199 182.500 204 184.300 209.800 185.200C215.700 184.300 220.700 182.500 220.900 180V160.500Z" fill="#f3ece7" stroke="#d9cbc2" stroke-width=".7"/>
<circle cx="209.800" cy="154.600" r="2.900" fill="#f4eeea" stroke="#d4c5bb" stroke-width=".8"/>
<rect x="201" y="162" width="17.700" height="18.200" fill="#f8f4f1" stroke="#cbb8ae" stroke-width=".9"/>
<path d="M201 171.300H218.700M209.800 162V171.300" stroke="#cbb8ae" stroke-width=".9"/>
<rect x="202.800" y="163.800" width="5" height="5.500" fill="#e4d5cc" stroke="#cdb7ae" stroke-width=".6"/>
<rect x="211.800" y="163.800" width="5" height="5.500" fill="#e4d5cc" stroke="#cdb7ae" stroke-width=".6"/>
<rect x="204.500" y="173" width="10.500" height="5.500" fill="#e6d6d4" stroke="#cdb7ae" stroke-width=".6"/>
<circle cx="209.800" cy="175.700" r="1.200" fill="#cfa9b6" stroke="none"/>
</g></svg>
<span class="t" style="left:231.80px;top:157.20px;font:normal bold 4.90px/7px 'Liberation Sans',sans-serif;color:#8c8c8c;letter-spacing:0.413px;">GOBIERNO DEL</span>
<span class="t" style="left:231.80px;top:163.74px;font:normal bold 7.40px/10px 'Liberation Sans',sans-serif;color:#7e7e7e;letter-spacing:0.042px;">ESTADO DE</span>
<span class="t" style="left:231.60px;top:171.37px;font:normal bold 9.60px/13px 'Liberation Sans',sans-serif;color:#7e7e7e;letter-spacing:0.921px;">MÉXICO</span>
<div class="r" style="left:289.20px;top:152.00px;width:0.80px;height:34.50px;background:#ece8e6"></div>
</div>
<div id="logo-estado">
<svg class="r" style="left:718.00px;top:146.00px;" width="50" height="40" viewBox="718 146 50 40"><g stroke-linejoin="round">
<path d="M722.800 159.200L725.600 162.400L722.800 165.600M726.400 158.800L729.600 162.400L726.400 166" stroke="#dccba6" stroke-width="1.800" fill="none"/>
<path d="M731 153.800L740.200 156.600L738.400 162.500L736.400 165Z" fill="#e4b8c4" stroke="#c78b9e" stroke-width="1.1"/>
<path d="M751.500 159.400C750.500 164.500 748.500 168 745.500 169.800L740.400 171L743 165.500C746 164 749 162 751.500 159.400Z" fill="#d9a0b3" stroke="#c78b9e" stroke-width=".8"/>
<path d="M749.300 152.300L743.200 156.400" stroke="#c9929f" stroke-width="1" fill="none"/>
<circle cx="741.800" cy="157.900" r="2.300" fill="#e3b5c2" stroke="#c78b9e" stroke-width=".7"/>
<path d="M738.400 162L736 166.200L737.600 171L740.400 169.600Z" fill="#dba6b6" stroke="#c78b9e" stroke-width=".6"/><path d="M741.800 160L744.500 164.600L740.400 169.600L737.800 165Z" fill="#f6ecdf" stroke="#cf9aab" stroke-width=".9"/>
<path d="M736.200 166L729.700 174.300L737.400 178.800L737.600 170.600Z" fill="#f3e3d8" stroke="#c78b9e" stroke-width="1.100"/>
<path d="M733.500 169.500L736.800 176.500" stroke="#d8a5b5" stroke-width=".8"/>
<circle cx="741.900" cy="157.600" r=".7" fill="#fff"/>
</g></svg>
<span class="t" style="left:761.20px;top:158.11px;font:normal normal 7.20px/10px 'Liberation Sans',sans-serif;color:#d3c6ad;letter-spacing:0.436px;">ESTADO DE</span>
<span class="t" style="left:748.60px;top:164.06px;font:normal bold 13.40px/19px 'Liberation Sans',sans-serif;color:#b5849d;letter-spacing:0.656px;-webkit-text-stroke:.55px #b5849d;">MÉXICO</span>
<svg class="r" style="left:806.50px;top:169.50px;" width="8" height="8" viewBox="0 0 8 8"><path d="M7 1L4 3L7 4.500M4 .5L1 3L4 5.500M6.500 5.500L3.500 6.500" stroke="#d6c39a" stroke-width="1.500" fill="none"/></svg>
<span class="t" style="left:739.30px;top:178.97px;font:italic normal 7.60px/11px 'Liberation Sans',sans-serif;color:#d3c5aa;letter-spacing:0.125px;">¡El poder de servir!</span>
</div>
</main>
<div id="scrollbar">
<div class="r" style="left:1008.00px;top:125.00px;width:13.00px;height:392.00px;background:linear-gradient(90deg,#dfe2e7,#eceef2 50%,#e4e7eb);border-left:1px solid #c6cad0"></div>
<div class="r" style="left:1021.00px;top:124.00px;width:3.00px;height:393.00px;background:#f1f3f6"></div>
<div class="r" style="left:1008.80px;top:140.50px;width:11.60px;height:135.20px;background:linear-gradient(90deg,#fafbfc,#f0f2f5 55%,#e6e9ed);border:1px solid #b4b9c1;border-radius:1.5px"></div>
<svg class="r" style="left:1011.50px;top:205.50px;" width="6" height="6" viewBox="0 0 6 6"><path d="M0 .5H6M0 2.500H6M0 4.500H6" stroke="#a3a8b0" stroke-width=".9"/></svg>
<svg class="r" style="left:1011.00px;top:133.30px;" width="7" height="3.6" viewBox="0 0 7 3.6"><path d="M0 3.600H7L3.500 0Z" fill="#555a63"/></svg>
<div class="r" style="left:1008.80px;top:479.00px;width:12.20px;height:38.00px;background:#dde6f4"></div>
<svg class="r" style="left:1011.00px;top:471.20px;" width="7" height="3.6" viewBox="0 0 7 3.6"><path d="M0 0H7L3.500 3.600Z" fill="#4c5159"/></svg>
<svg class="r" style="left:1012.00px;top:484.00px;" width="5" height="5" viewBox="0 0 6 6"><path d="M1 2.800L3 .8L5 2.800M1 5.300L3 3.300L5 5.300" fill="none" stroke="#3b6bd0" stroke-width="1.2"/></svg>
<svg class="r" style="left:1011.30px;top:495.20px;" width="6.4" height="6.4" viewBox="0 0 6.4 6.4"><circle cx="3.200" cy="3.200" r="2.300" fill="#e8eaee" stroke="#70757d" stroke-width=".9"/></svg>
<svg class="r" style="left:1012.00px;top:507.50px;" width="5" height="5" viewBox="0 0 6 6"><path d="M1 .8L3 2.800L5 .8M1 3.300L3 5.300L5 3.300" fill="none" stroke="#3b6bd0" stroke-width="1.2"/></svg>
</div>
<footer id="statusbar">
<span class="t" style="left:6.50px;top:519.37px;font:normal normal 9.00px/13px 'Liberation Sans',sans-serif;color:#3f444c;letter-spacing:-0.396px;">Página: 1 de 1</span>
<span class="t" style="left:74.00px;top:519.37px;font:normal normal 9.00px/13px 'Liberation Sans',sans-serif;color:#3f444c;letter-spacing:-0.426px;">Palabras: 106</span>
<span class="t" style="left:162.00px;top:519.37px;font:normal normal 9.00px/13px 'Liberation Sans',sans-serif;color:#3f444c;letter-spacing:-0.283px;">Español (México)</span>
<div class="r" style="left:66.00px;top:519.60px;width:1.00px;height:13.00px;background:#b4b9c1"></div>
<div class="r" style="left:67.00px;top:519.60px;width:1.00px;height:13.00px;background:#f3f4f6"></div>
<div class="r" style="left:131.00px;top:519.60px;width:1.00px;height:13.00px;background:#b4b9c1"></div>
<div class="r" style="left:132.00px;top:519.60px;width:1.00px;height:13.00px;background:#f3f4f6"></div>
<div class="r" style="left:232.50px;top:519.60px;width:1.00px;height:13.00px;background:#b4b9c1"></div>
<div class="r" style="left:233.50px;top:519.60px;width:1.00px;height:13.00px;background:#f3f4f6"></div>
<div class="r" style="left:258.50px;top:519.60px;width:1.00px;height:13.00px;background:#b4b9c1"></div>
<div class="r" style="left:259.50px;top:519.60px;width:1.00px;height:13.00px;background:#f3f4f6"></div>
<div class="r" style="left:813.00px;top:519.60px;width:1.00px;height:13.00px;background:#b4b9c1"></div>
<div class="r" style="left:814.00px;top:519.60px;width:1.00px;height:13.00px;background:#f3f4f6"></div>
<svg class="r" style="left:136.50px;top:519.10px;" width="14" height="13" viewBox="0 0 14 13"><path d="M1 4H9.500V11.500H1Z" fill="#f4f6f9" stroke="#7a8391" stroke-width=".9"/><path d="M2.500 7L5 10L12.500 1.500" fill="none" stroke="#3b6bc0" stroke-width="1.800"/></svg>
<svg class="r" style="left:240.00px;top:520.10px;" width="13" height="11" viewBox="0 0 13 11"><rect x=".5" y=".5" width="11.500" height="9.500" fill="#f7f8fa" stroke="#7b8595" stroke-width=".9"/><rect x="1" y="1" width="10.500" height="2.200" fill="#6f93cf"/><circle cx="3.200" cy="5.800" r="1.700" fill="#d8432f"/></svg>
<div class="r" style="left:817.30px;top:519.30px;width:13.90px;height:12.70px;background:linear-gradient(#fdf3bd,#fce584);border:1px solid #d9b840;border-radius:2px"></div>
<svg class="r" style="left:820.00px;top:521.90px;" width="9" height="8" viewBox="0 0 9 8"><rect x=".5" y=".5" width="8" height="7" fill="#fafbfc" stroke="#6d737c" stroke-width=".9"/><path d="M2 2.600H7M2 4.200H7M2 5.800H7" stroke="#9aa0a8" stroke-width=".7"/></svg>
<svg class="r" style="left:834.00px;top:521.40px;" width="10" height="9" viewBox="0 0 10 9"><path d="M.5 1.500C2 0.500 3.800 .8 5 2C6.200 .8 8 0.500 9.500 1.500V8C8 7.200 6.200 7.500 5 8.500C3.800 7.500 2 7.200 .5 8Z M5 2V8.500" fill="#f4f5f7" stroke="#6d737c" stroke-width=".8"/></svg>
<svg class="r" style="left:847.00px;top:521.40px;" width="11" height="10" viewBox="0 0 11 10"><rect x=".5" y=".5" width="8" height="7" fill="#f4f5f7" stroke="#6d737c" stroke-width=".9"/><circle cx="8" cy="7" r="2.600" fill="#4f9a8a" stroke="#3a6f88" stroke-width=".6"/></svg>
<svg class="r" style="left:862.50px;top:522.10px;" width="7" height="8" viewBox="0 0 7 8"><path d="M2 .8H6.500M3.500 3H6.500M3.500 5.200H6.500M2 7.300H6.500" stroke="#9096a0" stroke-width="1"/></svg>
<svg class="r" style="left:875.00px;top:521.90px;" width="9" height="8" viewBox="0 0 9 8"><path d="M.5 1.200H8.500M.5 4H8.500M.5 6.800H8.500" stroke="#8e949d" stroke-width="1.300"/></svg>
<span class="t" style="left:893.00px;top:519.37px;font:normal normal 9.00px/13px 'Liberation Sans',sans-serif;color:#3f444c;letter-spacing:-0.630px;">120%</span>
<svg class="r" style="left:918.50px;top:519.30px;" width="13" height="13" viewBox="0 0 13 13"><circle cx="6.500" cy="6.500" r="5.500" fill="#f4f5f7" stroke="#8a9099" stroke-width="1"/><path d="M3.800 6.500H9.200" stroke="#4a4f58" stroke-width="1.500"/></svg>
<div class="r" style="left:932.00px;top:525.10px;width:73.00px;height:1.00px;background:#a9aeb6"></div>
<div class="r" style="left:932.00px;top:526.10px;width:73.00px;height:1.00px;background:#f2f3f5"></div>
<svg class="r" style="left:965.80px;top:519.60px;" width="8" height="12" viewBox="0 0 8 12"><path d="M.6 .6H7.400V7.500L4 11.300L.6 7.500Z" fill="#f6f7f9" stroke="#7d838c" stroke-width=".9"/></svg>
<svg class="r" style="left:1004.80px;top:518.90px;" width="14" height="14" viewBox="0 0 14 14"><circle cx="7" cy="7" r="5.600" fill="#fcec9f" stroke="#ecd27a" stroke-width="1"/><path d="M3.800 7H10.200M7 3.800V10.200" stroke="#5a5036" stroke-width="1.500"/></svg>
<div class="r" style="left:417.00px;top:535.00px;width:40.50px;height:2.00px;background:#8b8e93;border-radius:1.500px 1.500px 0 0"></div>
<div class="r" style="left:462.00px;top:535.00px;width:87.50px;height:2.00px;background:#76797e;border-radius:1.500px 1.500px 0 0"></div>
<div class="r" style="left:556.00px;top:534.80px;width:41.50px;height:2.20px;background:#d4d6d9;border-radius:1.500px 1.500px 0 0"></div>
<div class="r" style="left:602.00px;top:535.00px;width:41.50px;height:2.00px;background:#94979c;border-radius:1.500px 1.500px 0 0"></div>
<div class="r" style="left:12.00px;top:534.60px;width:15.00px;height:2.40px;background:#5a6472;border-radius:6px 6px 0 0"></div>
<div class="r" style="left:1020.80px;top:3.50px;width:3.20px;height:530.30px;background:#f7f8fa"></div>
<div class="r" style="left:1020.60px;top:3.50px;width:0.60px;height:120.50px;background:#c9ced6"></div>
<div class="r" style="left:1017.00px;top:84.50px;width:3.60px;height:49.70px;background:#000;border-radius:1.5px"></div>
</footer>
</body></html>
